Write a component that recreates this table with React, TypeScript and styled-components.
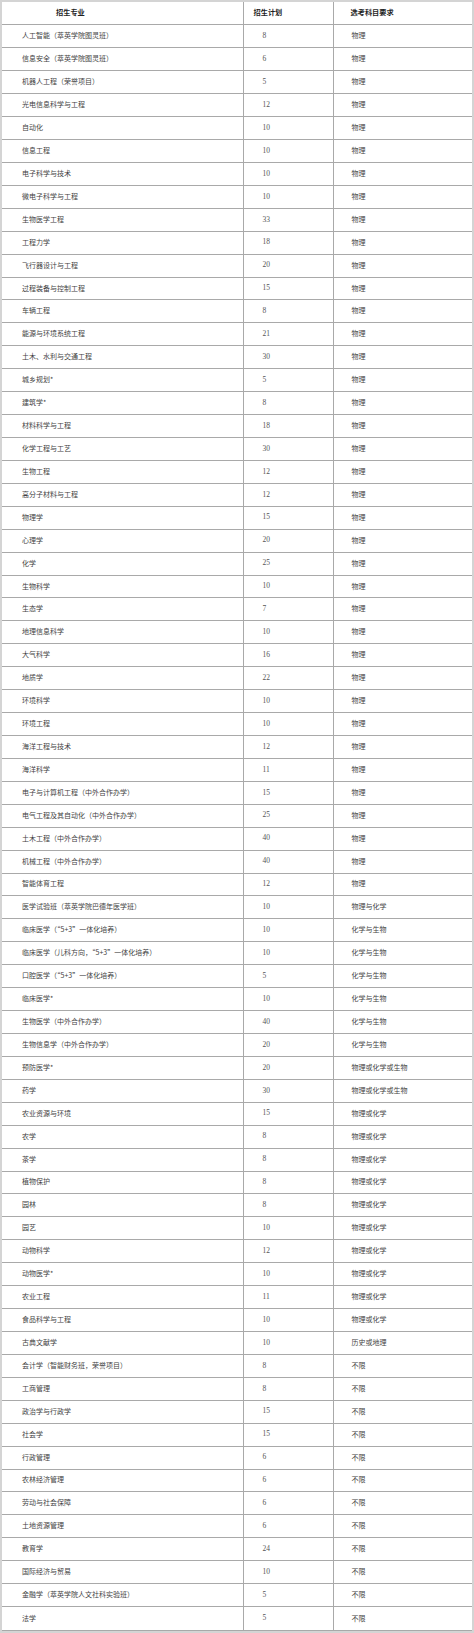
import React from "react";
import styled, { createGlobalStyle } from "styled-components";

const Global = createGlobalStyle`
  html, body { margin: 0; padding: 0; background: #ffffff; }
  #root { width: 474px; }
`;

type Row = [string, number, string];

const rows: Row[] = [
  ["人工智能（萃英学院图灵班）", 8, "物理"],
  ["信息安全（萃英学院图灵班）", 6, "物理"],
  ["机器人工程（荣誉项目）", 5, "物理"],
  ["光电信息科学与工程", 12, "物理"],
  ["自动化", 10, "物理"],
  ["信息工程", 10, "物理"],
  ["电子科学与技术", 10, "物理"],
  ["微电子科学与工程", 10, "物理"],
  ["生物医学工程", 33, "物理"],
  ["工程力学", 18, "物理"],
  ["飞行器设计与工程", 20, "物理"],
  ["过程装备与控制工程", 15, "物理"],
  ["车辆工程", 8, "物理"],
  ["能源与环境系统工程", 21, "物理"],
  ["土木、水利与交通工程", 30, "物理"],
  ["城乡规划*", 5, "物理"],
  ["建筑学*", 8, "物理"],
  ["材料科学与工程", 18, "物理"],
  ["化学工程与工艺", 30, "物理"],
  ["生物工程", 12, "物理"],
  ["高分子材料与工程", 12, "物理"],
  ["物理学", 15, "物理"],
  ["心理学", 20, "物理"],
  ["化学", 25, "物理"],
  ["生物科学", 10, "物理"],
  ["生态学", 7, "物理"],
  ["地理信息科学", 10, "物理"],
  ["大气科学", 16, "物理"],
  ["地质学", 22, "物理"],
  ["环境科学", 10, "物理"],
  ["环境工程", 10, "物理"],
  ["海洋工程与技术", 12, "物理"],
  ["海洋科学", 11, "物理"],
  ["电子与计算机工程（中外合作办学）", 15, "物理"],
  ["电气工程及其自动化（中外合作办学）", 25, "物理"],
  ["土木工程（中外合作办学）", 40, "物理"],
  ["机械工程（中外合作办学）", 40, "物理"],
  ["智能体育工程", 12, "物理"],
  ["医学试验班（萃英学院巴德年医学班）", 10, "物理与化学"],
  ["临床医学（“5+3”一体化培养）", 10, "化学与生物"],
  ["临床医学（儿科方向，“5+3”一体化培养）", 10, "化学与生物"],
  ["口腔医学（“5+3”一体化培养）", 5, "化学与生物"],
  ["临床医学*", 10, "化学与生物"],
  ["生物医学（中外合作办学）", 40, "化学与生物"],
  ["生物信息学（中外合作办学）", 20, "化学与生物"],
  ["预防医学*", 20, "物理或化学或生物"],
  ["药学", 30, "物理或化学或生物"],
  ["农业资源与环境", 15, "物理或化学"],
  ["农学", 8, "物理或化学"],
  ["茶学", 8, "物理或化学"],
  ["植物保护", 8, "物理或化学"],
  ["园林", 8, "物理或化学"],
  ["园艺", 10, "物理或化学"],
  ["动物科学", 12, "物理或化学"],
  ["动物医学*", 10, "物理或化学"],
  ["农业工程", 11, "物理或化学"],
  ["食品科学与工程", 10, "物理或化学"],
  ["古典文献学", 10, "历史或地理"],
  ["会计学（智能财务班，荣誉项目）", 8, "不限"],
  ["工商管理", 8, "不限"],
  ["政治学与行政学", 15, "不限"],
  ["社会学", 15, "不限"],
  ["行政管理", 6, "不限"],
  ["农林经济管理", 6, "不限"],
  ["劳动与社会保障", 6, "不限"],
  ["土地资源管理", 6, "不限"],
  ["教育学", 24, "不限"],
  ["国际经济与贸易", 10, "不限"],
  ["金融学（萃英学院人文社科实验班）", 5, "不限"],
  ["法学", 5, "不限"],
];

const Frame = styled.div`
  width: 474px;
  height: 1633px;
  box-sizing: border-box;
  border: 2px solid #d4d4d4;
  background: #ffffff;
`;

const Table = styled.table`
  width: 100%;
  height: 100%;
  border-collapse: collapse;
  table-layout: fixed;
  font-family: "Noto Sans CJK SC", "Noto Sans", sans-serif;
`;

const Tr = styled.tr`
  height: 22.9px;
`;

const Cell = styled.td<{ $pad: number; $serif?: boolean; $head?: boolean }>`
  padding: 0 0 1px ${(p) => p.$pad}px;
  border: 1px solid #a9a9a9;
  border-top: none;
  border-left-width: ${(p) => (p.$pad === 20 || p.$pad === 54 ? 0 : 1)}px;
  text-align: left;
  vertical-align: middle;
  white-space: nowrap;
  overflow: hidden;
  font-size: ${(p) => (p.$serif ? "7.5px" : p.$head ? "7.2px" : "7px")};
  line-height: 1;
  font-family: ${(p) =>
    p.$serif
      ? '"Liberation Serif", "Times New Roman", serif'
      : '"Noto Sans CJK SC", "Noto Sans", sans-serif'};
  font-weight: ${(p) => (p.$head ? 700 : 400)};
  color: ${(p) => (p.$head ? "#1e1e1e" : p.$serif ? "#555555" : "#3f3f3f")};
  &:last-child { border-right: none; }
`;

export default function App() {
  return (
    <>
      <Global />
      <Frame>
        <Table>
          <colgroup>
            <col style={{ width: 241 }} />
            <col style={{ width: 90 }} />
            <col />
          </colgroup>
          <tbody>
            <Tr>
              <Cell $pad={54} $head>招生专业</Cell>
              <Cell $pad={10} $head>招生计划</Cell>
              <Cell $pad={17} $head>选考科目要求</Cell>
            </Tr>
            {rows.map(([name, n, req], i) => (
              <Tr key={i}>
                <Cell $pad={20}>{name}</Cell>
                <Cell $pad={19} $serif>{n}</Cell>
                <Cell $pad={18}>{req}</Cell>
              </Tr>
            ))}
          </tbody>
        </Table>
      </Frame>
    </>
  );
}
